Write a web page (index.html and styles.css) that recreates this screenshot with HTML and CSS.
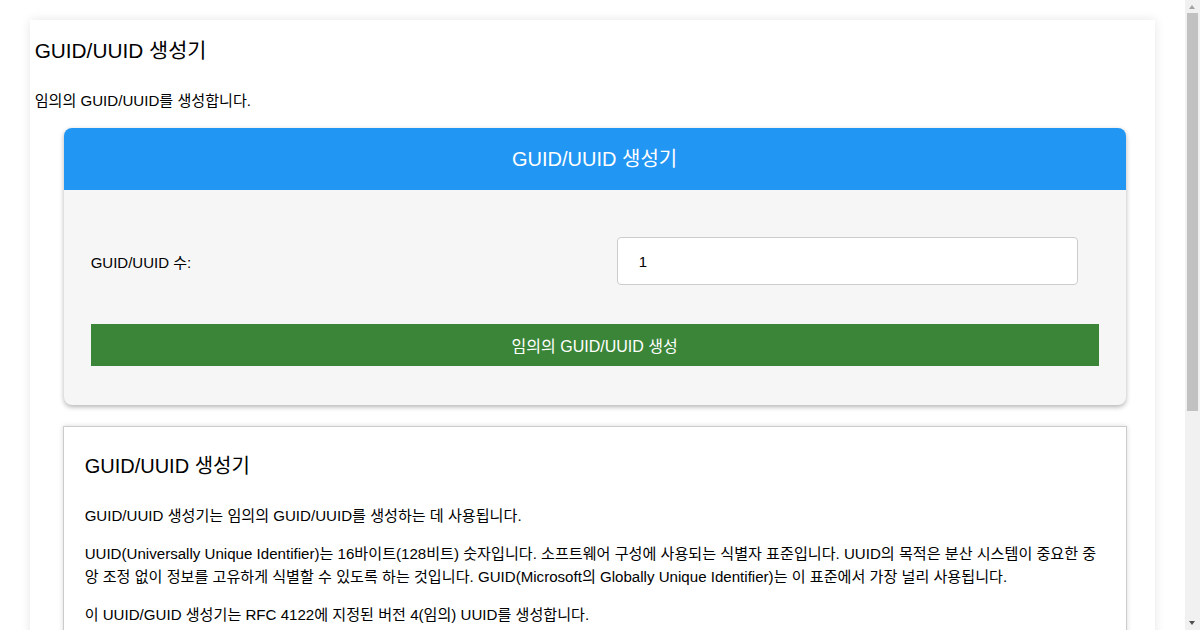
FILE: index.html
```html
<!DOCTYPE html>
<html lang="ko">
<head>
    <meta charset="UTF-8">
    <meta name="viewport" content="width=device-width, initial-scale=1.0">
    <title>GUID/UUID 생성기</title>
    <link rel="stylesheet" href="styles.css">
</head>
<body>

    <div class="page">
        <h1>GUID/UUID 생성기</h1>
        <p class="intro">임의의 GUID/UUID를 생성합니다.</p>

        <div class="tool-card">
            <div class="tool-header">GUID/UUID 생성기</div>
            <div class="tool-body">
                <div class="form-row">
                    <label for="count">GUID/UUID 수:</label>
                    <input type="text" id="count" value="1">
                </div>
                <button class="generate-btn">임의의 GUID/UUID 생성</button>
            </div>
        </div>

        <div class="info-card">
            <h2>GUID/UUID 생성기</h2>
            <p>GUID/UUID 생성기는 임의의 GUID/UUID를 생성하는 데 사용됩니다.</p>
            <p>UUID(Universally Unique Identifier)는 16바이트(128비트) 숫자입니다. 소프트웨어 구성에 사용되는 식별자 표준입니다. UUID의 목적은 분산 시스템이 중요한 중앙 조정 없이 정보를 고유하게 식별할 수 있도록 하는 것입니다. GUID(Microsoft의 Globally Unique Identifier)는 이 표준에서 가장 널리 사용됩니다.</p>
            <p>이 UUID/GUID 생성기는 RFC 4122에 지정된 버전 4(임의) UUID를 생성합니다.</p>
            <p>GUID/UUID는 데이터베이스 키, 구성 요소 식별자 등 고유한 값이 필요한 곳 어디에서나 사용할 수 있습니다.</p>
            <p>생성할 GUID/UUID의 수를 입력하고 버튼을 클릭하십시오.</p>
        </div>
    </div>

    <!-- scrollbar as it appears in the captured window -->
    <div class="scrollbar">
        <span class="arrow-up"></span>
        <span class="thumb"></span>
        <span class="arrow-down"></span>
    </div>

</body>
</html>
```

FILE: styles.css
```css
body {
    margin: 0;
    padding: 20px 0;
    width: calc(100% - 15px);
    background: #fff;
    font-family: "Liberation Sans", Arial, "Noto Sans CJK KR", sans-serif;
    color: #000;
}
.page {
    width: 95%;
    margin: 0 auto;
    padding: 5px;
    box-sizing: border-box;
    background: #fff;
    box-shadow: 0 0 10px rgba(0, 0, 0, 0.1);
}
h1 {
    font-size: 20.8px;
    font-weight: normal;
    margin: 9px 0 24px;
}
.intro {
    font-size: 15.1px;
    margin: 0 0 18px;
}
.tool-card {
    width: 1062px;
    margin-left: 29px;
    border-radius: 8px;
    overflow: hidden;
    background: #f6f6f6;
    box-shadow: 0 2px 5px rgba(0, 0, 0, 0.3);
}
.tool-header {
    background: #2196f3;
    color: white;
    text-align: center;
    font-size: 20px;
    height: 62px;
    line-height: 62px;
}
.tool-body {
    padding: 47px 27px 39px;
}
.form-row {
    display: grid;
    grid-template-columns: 526px 461px;
    align-items: center;
    font-size: 15px;
}
.form-row input {
    height: 48px;
    box-sizing: border-box;
    border: 1px solid #ccc;
    border-radius: 4px;
    padding: 0 21px;
    font-size: 15px;
    font-family: inherit;
    background: white;
}
.generate-btn {
    display: block;
    width: 100%;
    height: 42px;
    margin-top: 39px;
    border: none;
    background: #3b8539;
    color: white;
    font-size: 16px;
    font-family: inherit;
    cursor: pointer;
}
.info-card {
    width: 1064px;
    box-sizing: border-box;
    margin: 21px 0 0 28px;
    padding: 2px 21px 10px;
    background: white;
    border: 1px solid #ccc;
    box-shadow: 0 0 5px rgba(0, 0, 0, 0.15);
}
.info-card h2 {
    font-size: 20px;
    font-weight: normal;
    margin: 21px 0 25px;
}
.info-card p {
    font-size: 15.1px;
    line-height: 23px;
    margin: 0 0 15px;
    word-break: break-all;
}
.scrollbar {
    position: fixed;
    top: 0;
    right: 0;
    width: 15px;
    height: 100%;
    background: #f1f1f1;
}
.thumb {
    position: absolute;
    top: 13px;
    left: 2px;
    width: 11px;
    height: 398px;
    background: #c1c1c1;
}
.arrow-up,
.arrow-down {
    position: absolute;
    left: 4px;
    width: 0;
    height: 0;
    border-left: 3.5px solid transparent;
    border-right: 3.5px solid transparent;
}
.arrow-up {
    top: 5px;
    border-bottom: 4px solid #a3a3a3;
}
.arrow-down {
    bottom: 5px;
    border-top: 4px solid #505050;
}
```
